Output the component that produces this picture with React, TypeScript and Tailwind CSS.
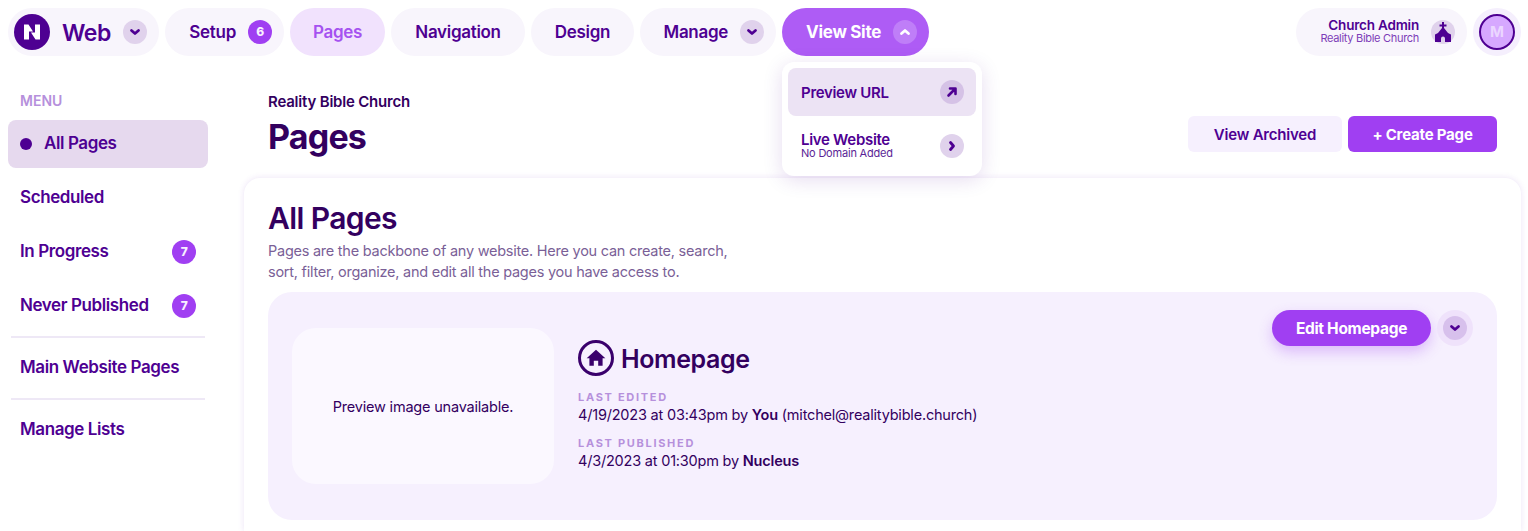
import type { ReactNode } from "react";

const font = "font-['Inter','Noto_Sans',sans-serif]";

function Chevron({ dir = "down", className = "" }: { dir?: "down" | "up" | "right"; className?: string }) {
  const d = dir === "down" ? "M3.5 5.5 7 8.5l3.5-3" : dir === "up" ? "M3.5 8.5 7 5.5l3.5 3" : "M5.5 3.5 8.5 7l-3 3.5";
  return (
    <svg viewBox="0 0 14 14" className={className} fill="none" stroke="currentColor" strokeWidth="2.8" strokeLinecap="round" strokeLinejoin="round">
      <path d={d} />
    </svg>
  );
}

function RoundChevron({ dir = "down", tone = "bg-[#e0d2ec] text-[#4e0092]" }: { dir?: "down" | "up" | "right"; tone?: string }) {
  return (
    <span className={`flex h-6 w-6 shrink-0 items-center justify-center rounded-full ${tone}`}>
      <Chevron dir={dir} className="h-3.5 w-3.5" />
    </span>
  );
}

function Pill({ children, className = "" }: { children: ReactNode; className?: string }) {
  return (
    <div className={`flex h-12 items-center justify-center rounded-3xl bg-[#f8f5fc] text-[17px] font-semibold tracking-[-0.3px] text-[#4e0092] ${className}`}>
      {children}
    </div>
  );
}

function Label({ children }: { children: ReactNode }) {
  return <span className="pt-0.5">{children}</span>;
}

function Count({ n }: { n: number }) {
  return (
    <span className="flex h-6 w-6 shrink-0 items-center justify-center rounded-full bg-[#a03ff2] text-[12px] font-extrabold text-[#f8f0ff]">
      {n}
    </span>
  );
}

function SideItem({ label, count }: { label: string; count?: number }) {
  return (
    <div className="flex h-12 items-center justify-between pl-3 pr-3 text-[17px] font-semibold tracking-[-0.4px] text-[#4e0092]">
      <span>{label}</span>
      {count !== undefined && <Count n={count} />}
    </div>
  );
}

function TopBar() {
  return (
    <header className="flex h-16 shrink-0 items-start gap-1.5 pl-2 pr-[7px] pt-2">
      <Pill className="w-[151px] justify-start gap-3 pl-1.5 pr-3">
        <span className="flex h-9 w-9 items-center justify-center rounded-full bg-[#4e0092] text-white">
          <svg viewBox="0 0 16 16" className="h-4 w-4" fill="currentColor">
            <path d="M0 .5h4.500l4.500 7H5V15.500H0z" />
            <path d="M16 15.500h-4.500l-4.500-7h4V.5h5z" />
          </svg>
        </span>
        <span className="pt-0.5 text-[23px] tracking-[-0.5px]">Web</span>
        <span className="ml-auto"><RoundChevron /></span>
      </Pill>
      <Pill className="w-[119px] justify-end gap-3 pr-3">
        <Label>Setup</Label>
        <Count n={6} />
      </Pill>
      <Pill className="w-[95px] !bg-[#f1e2fd] !text-[#a552f0]"><Label>Pages</Label></Pill>
      <Pill className="w-[134px]"><Label>Navigation</Label></Pill>
      <Pill className="w-[103px]"><Label>Design</Label></Pill>
      <Pill className="w-[136px] justify-end gap-3 pr-3">
        <Label>Manage</Label>
        <RoundChevron />
      </Pill>
      <div className="relative">
        <Pill className="w-[147px] justify-end gap-3 pr-3 !bg-[#ae5cf5] !font-bold !text-white">
          <Label>View Site</Label>
          <RoundChevron dir="up" tone="bg-[#bf7ef8] text-white" />
        </Pill>
        {/* Dropdown */}
        <div className="absolute left-0 top-[54px] z-10 flex w-[200px] flex-col gap-1.5 rounded-xl bg-white p-1.5 shadow-[0_4px_20px_rgba(78,0,146,0.14)]">
          <div className="flex h-12 items-center justify-between rounded-lg bg-[#ece3f4] pl-[13px] pr-3 text-[15px] font-semibold tracking-[-0.3px] text-[#4e0092]">
            <Label>Preview URL</Label>
            <span className="flex h-6 w-6 items-center justify-center rounded-full bg-[#d5c2e6]">
              <svg viewBox="0 0 14 14" className="h-3.5 w-3.5" fill="none" stroke="currentColor" strokeWidth="2.6" strokeLinecap="round" strokeLinejoin="round">
                <path d="M3.500 10.500 10 4M5 3.500h5.500V9" />
              </svg>
            </span>
          </div>
          <div className="flex h-12 items-center justify-between pl-[13px] pr-3 text-[#4e0092]">
            <div className="flex flex-col">
              <span className="text-[15px] font-semibold leading-[15px] tracking-[-0.3px]">Live Website</span>
              <span className="text-[11px] leading-[13px] tracking-[-0.2px] text-[#5b1f96]">No Domain Added</span>
            </div>
            <RoundChevron dir="right" />
          </div>
        </div>
      </div>

      <div className="ml-auto flex items-start gap-1.5">
        <Pill className="w-[171px] justify-end gap-3 pr-3">
          <div className="flex flex-col items-end">
            <span className="text-[13.5px] font-semibold leading-[13px] tracking-[-0.2px]">Church Admin</span>
            <span className="text-[11px] font-normal leading-[13px] tracking-[-0.3px] text-[#7d3db8]">Reality Bible Church</span>
          </div>
          <span className="flex h-6 w-6 items-center justify-center rounded-full bg-[#e0d2ec] text-[#4e0092]">
            <svg viewBox="0 0 24 24" className="h-6 w-6" fill="currentColor">
              <path d="M11 2h2v2.500h2.500v2H13v1.500l4 5 3 1.500V22h-6v-3.500a2 2 0 0 0-4 0V22H4v-7.500l3-1.500 4-5V6.500H8.500v-2H11z" />
            </svg>
          </span>
        </Pill>
        <div className="flex h-12 w-12 items-center justify-center rounded-full bg-[#f5effd]">
          <span className="flex h-9 w-9 items-center justify-center rounded-full border-2 border-[#4e0092] bg-[#d6a8ff] text-[15px] font-bold text-[#ebd6ff]">
            M
          </span>
        </div>
      </div>
    </header>
  );
}

function Sidebar() {
  return (
    <aside className="flex w-[244px] shrink-0 flex-col pl-2 pr-9 pt-[28px]">
      <div className="mb-[11px] pl-3 text-[14px] font-semibold leading-[17px] text-[#b690dc]">MENU</div>
      <div className="flex h-12 items-center gap-3 rounded-lg bg-[#e6d9ee] pl-3 text-[17px] font-semibold tracking-[-0.4px] text-[#4e0092]">
        <span className="h-3 w-3 rounded-full bg-[#4e0092]" />
        All Pages
      </div>
      <div className="mt-1.5 flex flex-col gap-1.5">
        <SideItem label="Scheduled" />
        <SideItem label="In Progress" count={7} />
        <SideItem label="Never Published" count={7} />
      </div>
      <hr className="mx-[3px] mt-1.5 border-t-2 border-[#eee8f6]" />
      <div className="mt-1.5">
        <SideItem label="Main Website Pages" />
      </div>
      <hr className="mx-[3px] mt-1.5 border-t-2 border-[#eee8f6]" />
      <div className="mt-1.5">
        <SideItem label="Manage Lists" />
      </div>
    </aside>
  );
}

function PageCard() {
  return (
    <div className="relative flex h-[228px] shrink-0 items-start rounded-3xl bg-[#f6f0fe] pl-6 pt-9">
      <div className="flex h-[156px] w-[262px] items-center justify-center rounded-3xl bg-[#fbf8ff] pt-0.5 text-[14.5px] tracking-[-0.2px] text-[#33005f]">
        Preview image unavailable.
      </div>
      <div className="ml-6 pt-3 text-[#33005f]">
        <div className="flex items-center gap-[7px]">
          <span className="flex h-9 w-9 items-center justify-center rounded-full border-[3px] border-[#3a006c]">
            <svg viewBox="0 0 20 20" className="h-[22px] w-[22px]" fill="#3a006c">
              <path d="M10 2.500 18.500 10.200H16V17h-4v-4.500H8V17H4v-6.800H1.500z" />
            </svg>
          </span>
          <span className="pt-0.5 text-[25px] font-semibold leading-[32px] tracking-[-0.4px]">Homepage</span>
        </div>
        <div className="mt-[13px] text-[11px] font-bold leading-[16px] tracking-[1.7px] text-[#b690dc]">LAST EDITED</div>
        <div className="text-[14.5px] leading-[20px] tracking-[-0.2px]">
          4/19/2023 at 03:43pm by <b className="font-semibold">You</b> (mitchel@realitybible.church)
        </div>
        <div className="mt-[10px] text-[11px] font-bold leading-[16px] tracking-[1.7px] text-[#b690dc]">LAST PUBLISHED</div>
        <div className="text-[14.5px] leading-[20px] tracking-[-0.2px]">
          4/3/2023 at 01:30pm by <b className="font-semibold">Nucleus</b>
        </div>
      </div>
      <div className="absolute right-6 top-[18px] flex items-center gap-1.5">
        <div className="flex h-9 w-[159px] items-center justify-center rounded-[18px] bg-[#a03ff2] text-[15.5px] font-bold tracking-[-0.3px] text-white shadow-[0_6px_14px_rgba(160,63,242,0.3)]">
          <Label>Edit Homepage</Label>
        </div>
        <div className="flex h-9 w-9 items-center justify-center rounded-full bg-[#efe2fb]">
          <RoundChevron tone="bg-[#d7c0ec] text-[#4e0092]" />
        </div>
      </div>
    </div>
  );
}

export default function App() {
  return (
    <div className={`flex h-[531px] w-full flex-col overflow-hidden bg-white ${font}`}>
      <TopBar />
      <div className="flex min-h-0 flex-1">
        <Sidebar />
        <main className="flex min-w-0 flex-1 flex-col pr-[7px]">
          <div className="flex h-[114px] shrink-0 items-start justify-between pl-6 pr-6 pt-[29px]">
            <div>
              <div className="text-[15px] font-semibold leading-[17px] tracking-[-0.2px] text-[#33005f]">Reality Bible Church</div>
              <h1 className="mt-[5px] text-[34px] font-bold leading-[44px] tracking-[-0.8px] text-[#33005f]">Pages</h1>
            </div>
            <div className="mt-[23px] flex gap-1.5">
              <div className="flex h-9 w-[154px] items-center justify-center rounded-md bg-[#f6f0fe] text-[15px] font-semibold tracking-[-0.2px] text-[#4e0092]">
                <Label>View Archived</Label>
              </div>
              <div className="flex h-9 w-[149px] items-center justify-center rounded-md bg-[#a03ff2] text-[15px] font-bold tracking-[-0.2px] text-white">
                <Label>+ Create Page</Label>
              </div>
            </div>
          </div>
          <section className="flex min-h-0 flex-1 flex-col rounded-t-2xl bg-white px-6 pt-[20px] shadow-[0_0_6px_rgba(110,50,190,0.14)]">
            <h2 className="text-[30px] font-semibold leading-[40px] tracking-[-0.6px] text-[#33005f]">All Pages</h2>
            <p className="mt-[2px] text-[14.5px] leading-[21px] tracking-[-0.25px] text-[#7a5f97]">
              Pages are the backbone of any website. Here you can create, search,
              <br />
              sort, filter, organize, and edit all the pages you have access to.
            </p>
            <div className="mt-[10px]">
              <PageCard />
            </div>
          </section>
        </main>
      </div>
    </div>
  );
}
